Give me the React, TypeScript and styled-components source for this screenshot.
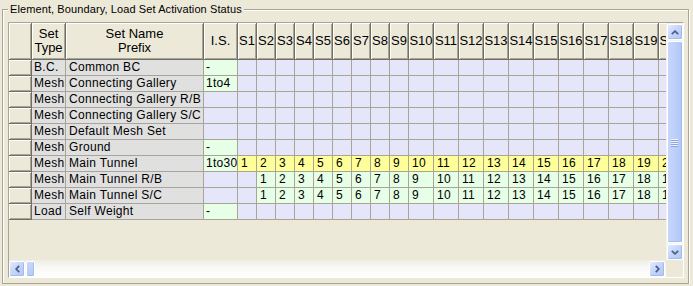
import React from "react"
import { createGlobalStyle, styled } from "styled-components"

type StageRow = {
  type: string
  name: string
  is?: string
  stages?: { from: number; tone: "yellow" | "green" }
}

const rows: StageRow[] = [
  { type: "B.C.", name: "Common BC", is: "-" },
  { type: "Mesh", name: "Connecting Gallery", is: "1to4" },
  { type: "Mesh", name: "Connecting Gallery R/B" },
  { type: "Mesh", name: "Connecting Gallery S/C" },
  { type: "Mesh", name: "Default Mesh Set" },
  { type: "Mesh", name: "Ground", is: "-" },
  { type: "Mesh", name: "Main Tunnel", is: "1to30", stages: { from: 1, tone: "yellow" } },
  { type: "Mesh", name: "Main Tunnel R/B", stages: { from: 2, tone: "green" } },
  { type: "Mesh", name: "Main Tunnel S/C", stages: { from: 2, tone: "green" } },
  { type: "Load", name: "Self Weight", is: "-" },
]

// only S1..S20 reach into the visible part of the grid
const STAGES = 20

const colors = {
  face: "#ece9d8",
  line: "#a8a596",
  dark: "#716f64",
  gray: "#e0e0e0",
  green: "#e6ffe6",
  lavender: "#e6e6fa",
  yellow: "#ffff99",
}

const GlobalStyle = createGlobalStyle`
  html, body {
    margin: 0;
    background: ${colors.face};
  }
  body {
    font-family: "Liberation Sans", Arial, sans-serif;
    color: #000;
  }
`

const ChevronUp = () => (
  <svg width="8" height="5" viewBox="0 0 8 5">
    <path d="M0.8 4.2 L4 1.2 L7.2 4.2" fill="none" stroke="#4d6185" strokeWidth="1.8" />
  </svg>
)

const ChevronDown = () => (
  <svg width="8" height="5" viewBox="0 0 8 5">
    <path d="M0.8 0.8 L4 3.8 L7.2 0.8" fill="none" stroke="#4d6185" strokeWidth="1.8" />
  </svg>
)

const ChevronLeft = () => (
  <svg width="5" height="8" viewBox="0 0 5 8">
    <path d="M4.2 0.8 L1.2 4 L4.2 7.2" fill="none" stroke="#4d6185" strokeWidth="1.8" />
  </svg>
)

const ChevronRight = () => (
  <svg width="5" height="8" viewBox="0 0 5 8">
    <path d="M0.8 0.8 L3.8 4 L0.8 7.2" fill="none" stroke="#4d6185" strokeWidth="1.8" />
  </svg>
)

const App: React.FC = () => {
  const stageCols = Array.from({ length: STAGES }, (_, i) => i + 1)

  return (
    <>
      <GlobalStyle />
      <Page>
        <Group>
          <Caption>Element, Boundary, Load Set Activation Status</Caption>
          <Control>
            <Viewport>
              <Table>
                <HeadCell />
                <HeadCell>
                  Set
                  <br />
                  Type
                </HeadCell>
                <HeadCell>
                  Set Name
                  <br />
                  Prefix
                </HeadCell>
                <HeadCell>I.S.</HeadCell>
                {stageCols.map(n => (
                  <HeadCell key={n}>S{n}</HeadCell>
                ))}

                {rows.map(row => (
                  <React.Fragment key={row.name}>
                    <HeadCell />
                    <Cell $bg={colors.gray} $pad={2}>
                      {row.type}
                    </Cell>
                    <Cell $bg={colors.gray} $pad={3}>
                      {row.name}
                    </Cell>
                    <Cell $bg={row.is ? colors.green : colors.lavender} $pad={2}>
                      {row.is}
                    </Cell>
                    {stageCols.map(n => {
                      const s = row.stages
                      const on = s && n >= s.from
                      const bg = on
                        ? s.tone === "yellow"
                          ? colors.yellow
                          : colors.green
                        : colors.lavender
                      return (
                        <Cell key={n} $bg={bg} $pad={3}>
                          {on ? n - s.from + 1 : ""}
                        </Cell>
                      )
                    })}
                  </React.Fragment>
                ))}
              </Table>
            </Viewport>

            <VScroll>
              <ScrollButton>
                <ChevronUp />
              </ScrollButton>
              <VThumb>
                <Grip>
                  <i />
                  <i />
                  <i />
                  <i />
                </Grip>
              </VThumb>
              <ScrollButton>
                <ChevronDown />
              </ScrollButton>
            </VScroll>

            <HScroll>
              <ScrollButton>
                <ChevronLeft />
              </ScrollButton>
              <HThumb />
              <HTrack />
              <ScrollButton>
                <ChevronRight />
              </ScrollButton>
            </HScroll>

            <Corner />
          </Control>
        </Group>
      </Page>
    </>
  )
}

const Page = styled.div`
  padding: 9px 0 0 2px;
`

const Group = styled.div`
  position: relative;
  box-sizing: border-box;
  width: 687px;
  height: 275px;
  padding: 12px 4px 5px 5px;
  border: 1px solid ${colors.line};
  box-shadow:
    inset 1px 1px 0 #fff,
    1px 1px 0 #fff;
`

const Caption = styled.span`
  position: absolute;
  top: -8px;
  left: 5px;
  padding: 0 2px;
  background: ${colors.face};
  font-size: 11px;
  line-height: 14px;
  letter-spacing: 0.1px;
  white-space: nowrap;
`

const Control = styled.div`
  box-sizing: border-box;
  width: 676px;
  height: 256px;
  display: grid;
  grid-template-columns: 657px 17px;
  grid-template-rows: 237px 17px;
  border: 1px solid ${colors.line};
  border-right-color: #fff;
  border-bottom-color: #fff;
  background: ${colors.face};
`

const Viewport = styled.div`
  overflow: hidden;
`

const Table = styled.div`
  display: grid;
  width: max-content;
  grid-template-columns: 23px 34px 138px 34px repeat(9, 19px) repeat(11, 25px);
  grid-template-rows: 37px;
  grid-auto-rows: 16px;
`

const HeadCell = styled.div`
  box-sizing: border-box;
  display: flex;
  align-items: center;
  justify-content: center;
  text-align: center;
  background: ${colors.face};
  border-right: 1px solid ${colors.dark};
  border-bottom: 1px solid ${colors.dark};
  box-shadow:
    inset 1px 1px 0 #fff,
    inset -1px -1px 0 ${colors.line};
  font-size: 13px;
  line-height: 14px;
  white-space: nowrap;
  overflow: hidden;
`

const Cell = styled.div<{ $bg: string; $pad: number }>`
  box-sizing: border-box;
  display: flex;
  align-items: center;
  padding-left: ${({ $pad }) => $pad}px;
  background: ${({ $bg }) => $bg};
  border-right: 1px solid ${colors.line};
  border-bottom: 1px solid ${colors.line};
  font-size: 12px;
  letter-spacing: 0.3px;
  line-height: 15px;
  white-space: nowrap;
  overflow: hidden;
`

const ScrollButton = styled.div`
  box-sizing: border-box;
  flex: none;
  width: 16px;
  height: 16px;
  display: flex;
  align-items: center;
  justify-content: center;
  border: 1px solid #fff;
  border-radius: 2px;
  background: linear-gradient(135deg, #e2eafe 0%, #c6d6fb 45%, #b2c7f6 100%);
  box-shadow: inset -1px -1px 0 #a4bbee;
`

const VScroll = styled.div`
  display: flex;
  flex-direction: column;
  align-items: center;
  gap: 1px;
  padding-top: 1px;
  background: #f4f3ee;
`

const VThumb = styled.div`
  box-sizing: border-box;
  flex: 1;
  width: 16px;
  display: flex;
  align-items: center;
  justify-content: center;
  border: 1px solid #fff;
  border-radius: 2px;
  background: linear-gradient(90deg, #c7d6fc 0%, #bdd0fb 50%, #b0c6f6 100%);
  box-shadow: inset -1px -1px 0 #a4bbee;
`

const Grip = styled.div`
  display: flex;
  flex-direction: column;
  gap: 1px;

  i {
    display: block;
    width: 7px;
    height: 1px;
    background: #eef3fe;
    box-shadow: 0 1px 0 #8ca6dd;
  }
`

const HScroll = styled.div`
  display: flex;
  align-items: center;
  padding-right: 1px;
  background: linear-gradient(180deg, #eeede5 0%, #f8f8f4 40%, #fefefe 100%);
`

const HThumb = styled.div`
  box-sizing: border-box;
  flex: none;
  width: 9px;
  height: 16px;
  margin-left: 1px;
  border: 1px solid #fff;
  border-radius: 2px;
  background: linear-gradient(180deg, #c7d6fc 0%, #b6cbf8 100%);
  box-shadow: inset -1px -1px 0 #a4bbee;
`

const HTrack = styled.div`
  flex: 1;
`

const Corner = styled.div`
  background: ${colors.face};
`

export default App
